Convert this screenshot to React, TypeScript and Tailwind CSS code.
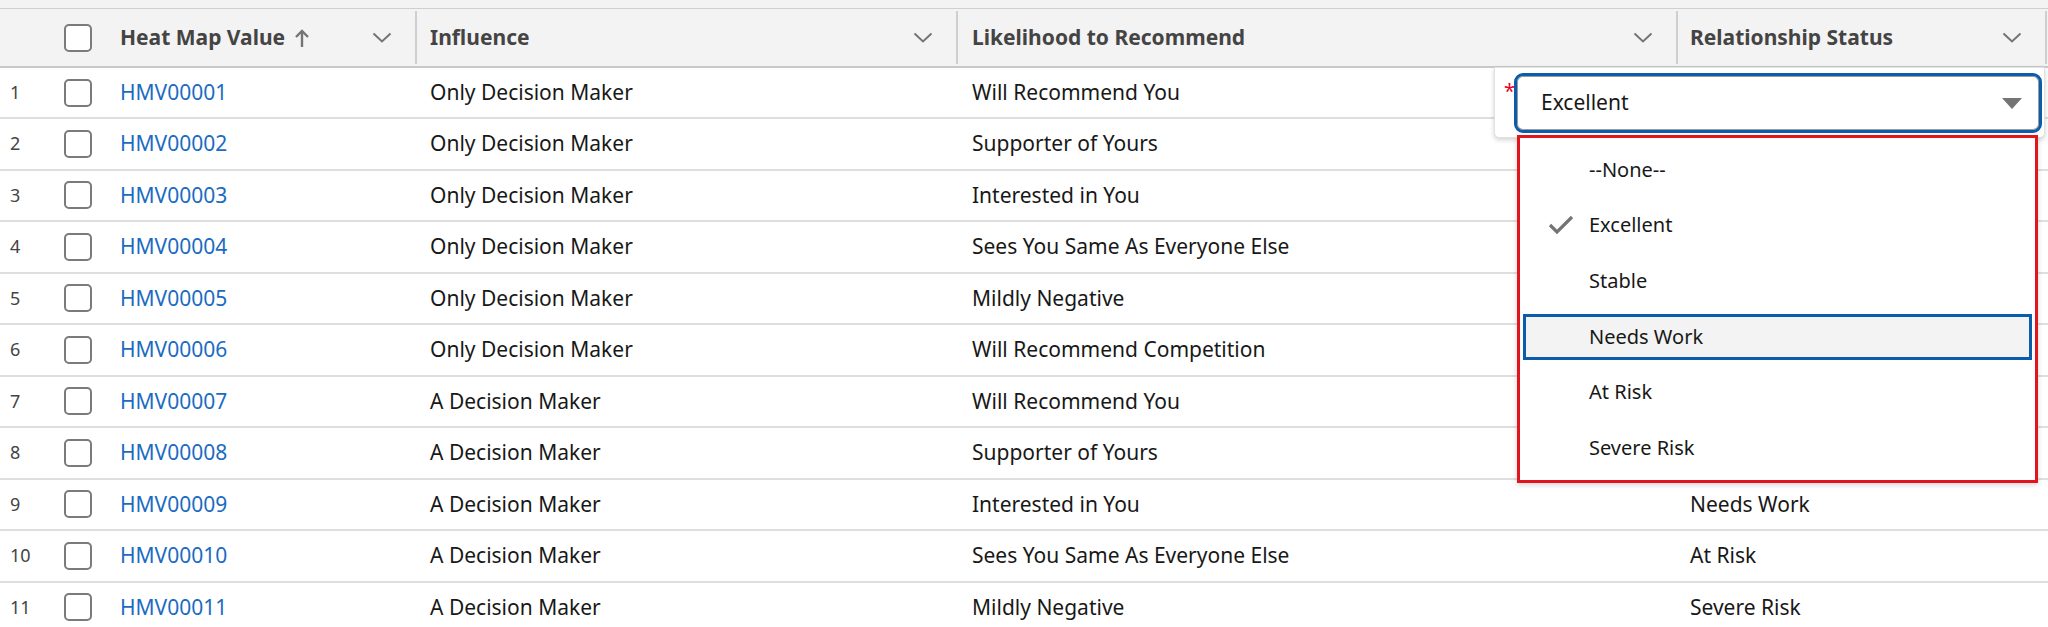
import React from "react";

const likelihood = [
  "Will Recommend You",
  "Supporter of Yours",
  "Interested in You",
  "Sees You Same As Everyone Else",
  "Mildly Negative",
  "Will Recommend Competition",
];
const rel = ["Excellent", "Stable", "Needs Work", "At Risk", "Severe Risk", "Excellent"];

const rows = Array.from({ length: 11 }, (_, i) => ({
  n: i + 1,
  id: "HMV" + String(i + 1).padStart(5, "0"),
  influence: i < 6 ? "Only Decision Maker" : "A Decision Maker",
  like: likelihood[i % 6],
  rel: rel[i % 6],
}));

const Chevron = () => (
  <svg width="20" height="11" viewBox="0 0 20 11" className="shrink-0">
    <polyline points="1.5,1.5 10,9.5 18.5,1.5" fill="none" stroke="#747474" strokeWidth="2" />
  </svg>
);

const ArrowUp = () => (
  <svg width="14" height="18" viewBox="0 0 14 18" className="ml-[10px]">
    <line x1="7" y1="2" x2="7" y2="18" stroke="#747474" strokeWidth="2.4" />
    <polyline points="1,8 7,2 13,8" fill="none" stroke="#747474" strokeWidth="2.4" />
  </svg>
);

const Checkbox = () => (
  <div className="ml-[12px] w-[28px] h-[28px] rounded-[5px] border-2 border-[#7b7b7b] bg-white" />
);

const grid = "grid grid-cols-[52px_56px_307px_541px_720px_369px_3px]";

export default function App() {
  const options = ["--None--", "Excellent", "Stable", "Needs Work", "At Risk", "Severe Risk"];
  return (
    <div className="relative w-[2048px] h-[627px] overflow-hidden bg-white font-['Noto_Sans',sans-serif] text-[#181818]">
      <div className="h-[9px] bg-[#f3f3f3] border-b border-[#cfcfcf]" />
      <div className={`${grid} h-[59px] bg-[#f3f3f3] border-b-2 border-[#c9c9c9] text-[21px] font-bold text-[#444444]`}>
        <div />
        <div className="flex items-center">
          <Checkbox />
        </div>
        <div className="flex items-center justify-between pl-[12px] pr-[23px]">
          <div className="flex items-center">
            <span>Heat Map Value</span>
            <ArrowUp />
          </div>
          <Chevron />
        </div>
        <div className="my-[2px] border-l-2 border-[#cfcfcf] flex items-center justify-between pl-[13px] pr-[23px]">
          <span>Influence</span>
          <Chevron />
        </div>
        <div className="my-[2px] border-l-2 border-[#cfcfcf] flex items-center justify-between pl-[14px] pr-[23px]">
          <span>Likelihood to Recommend</span>
          <Chevron />
        </div>
        <div className="my-[2px] border-l-2 border-[#cfcfcf] flex items-center justify-between pl-[12px] pr-[23px]">
          <span>Relationship Status</span>
          <Chevron />
        </div>
        <div className="my-[2px] border-l-2 border-[#cfcfcf]" />
      </div>
      {rows.map((r) => (
        <div
          key={r.n}
          className={`${grid} ${r.n === 1 ? "h-[51px]" : "h-[51.5px]"} border-b-2 border-[#dedede] items-center text-[21px]`}
        >
          <div className="pl-[10px] text-[18px] text-[#444444]">{r.n}</div>
          <div className="flex items-center">
            <Checkbox />
          </div>
          <div className="pl-[12px] text-[#1a6bc2]">{r.id}</div>
          <div className="pl-[15px]">{r.influence}</div>
          <div className="pl-[16px]">{r.like}</div>
          <div className="pl-[14px]">{r.rel}</div>
          <div />
        </div>
      ))}

      {/* inline edit popover */}
      <div className="absolute left-[1494px] top-[67px] w-[551px] h-[71px] bg-white border border-[#e2e2e2] rounded-b-[5px] shadow-[0_2px_5px_rgba(0,0,0,0.18)] flex items-start pl-[9px] pt-[5px]">
        <span className="text-[#ea001e] text-[20px] leading-none mt-[8px] w-[10px]">*</span>
        <div className="w-[528px] h-[60px] rounded-[9px] border-[3px] border-[#0b5cab] shadow-[inset_0_0_0_1px_#9a9a9a] bg-white flex items-center justify-between pl-[24px] pr-[17px] text-[21px]">
          <span>Excellent</span>
          <svg width="20" height="11" viewBox="0 0 20 11">
            <polygon points="0,0 20,0 10,11" fill="#747474" />
          </svg>
        </div>
      </div>

      {/* listbox */}
      <div className="absolute left-[1517px] top-[135px] w-[521px] h-[348px] bg-white border-[3px] border-[#e3141c] py-[4px] shadow-[0_2px_5px_rgba(0,0,0,0.16)]">
        {options.map((o) => {
          const hl = o === "Needs Work";
          return (
            <div key={o} className="h-[55.6px] px-[3px] py-[4.8px] text-[20px]">
              <div
                className={
                  hl
                    ? "h-full flex items-center border-[3px] border-[#0b5cab] bg-[#f3f3f3] pl-[22px]"
                    : "h-full flex items-center border-[3px] border-transparent pl-[22px]"
                }
              >
                <span className="w-[41px] flex items-center">
                  {o === "Excellent" ? (
                    <svg width="26" height="20" viewBox="0 0 26 20">
                      <polyline points="2,10 9,17 24,2" fill="none" stroke="#747474" strokeWidth="3.2" />
                    </svg>
                  ) : null}
                </span>
                <span>{o}</span>
              </div>
            </div>
          );
        })}
      </div>
    </div>
  );
}
